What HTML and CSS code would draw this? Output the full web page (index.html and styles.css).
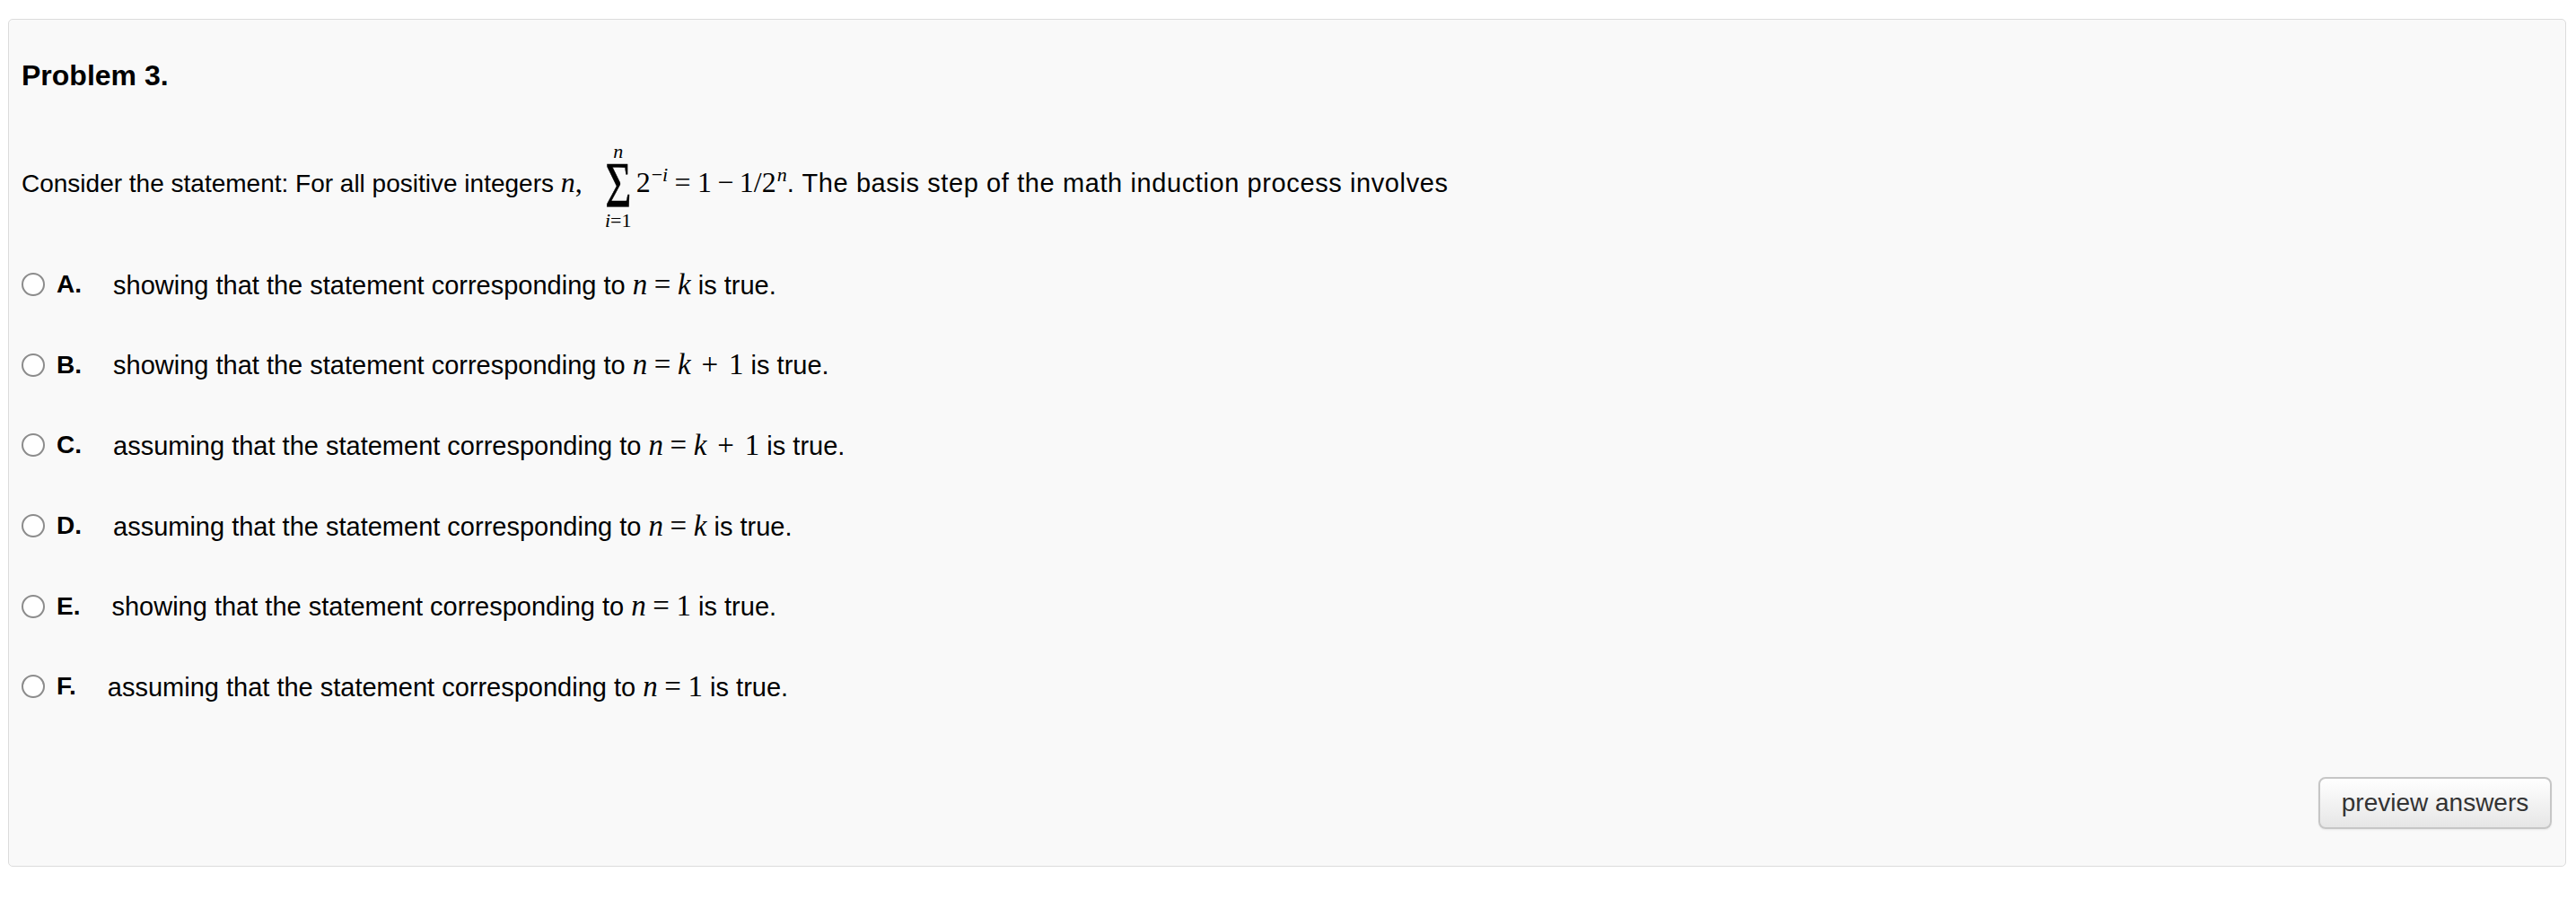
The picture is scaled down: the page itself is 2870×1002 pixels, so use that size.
FILE: index.html
```html
<!DOCTYPE html>
<html lang="en">
<head>
<meta charset="utf-8">
<title>Problem 3</title>
<link rel="stylesheet" href="styles.css">
</head>
<body>
<div class="problem">
  <h3 class="title">Problem 3.</h3>
  <div class="stem">Consider the statement: For all positive integers <span class="math"><i>n</i>,</span><span class="sum"><span class="lim top"><i>n</i></span><span class="sigma">Σ</span><span class="lim bot"><i>i</i>=1</span></span><span class="math">2<sup>−<i>i</i></sup><span class="rel">=</span>1<span class="bin">−</span>1/2<sup><i>n</i></sup></span><span class="tail">. The basis step of the math induction process involves</span></div>
  <ul class="choices">
    <li class="choice"><span class="radio"></span><span class="letter">A.</span><span class="text">showing that the statement corresponding to <span class="math"><i>n</i><span class="rel">=</span><i>k</i></span> is true.</span></li>
    <li class="choice"><span class="radio"></span><span class="letter">B.</span><span class="text">showing that the statement corresponding to <span class="math"><i>n</i><span class="rel">=</span><i>k</i><span class="bin">+</span>1</span> is true.</span></li>
    <li class="choice"><span class="radio"></span><span class="letter">C.</span><span class="text">assuming that the statement corresponding to <span class="math"><i>n</i><span class="rel">=</span><i>k</i><span class="bin">+</span>1</span> is true.</span></li>
    <li class="choice"><span class="radio"></span><span class="letter">D.</span><span class="text">assuming that the statement corresponding to <span class="math"><i>n</i><span class="rel">=</span><i>k</i></span> is true.</span></li>
    <li class="choice"><span class="radio"></span><span class="letter">E.</span><span class="text">showing that the statement corresponding to <span class="math"><i>n</i><span class="rel">=</span>1</span> is true.</span></li>
    <li class="choice"><span class="radio"></span><span class="letter">F.</span><span class="text">assuming that the statement corresponding to <span class="math"><i>n</i><span class="rel">=</span>1</span> is true.</span></li>
  </ul>
  <div class="actions"><button class="btn" type="button">preview answers</button></div>
</div>
</body>
</html>
```
FILE: styles.css
```css
* { box-sizing: border-box; }
html, body { margin: 0; background: #ffffff; }
body {
  padding: 21px 11px 0 9px;
  font-family: "Liberation Sans", Arial, Helvetica, sans-serif;
  color: #000;
}
.problem {
  background: #f9f9f9;
  border: 1px solid #dcdcdc;
  border-radius: 5px;
  padding: 43px 15px 41px 14px;
}
.title {
  margin: 0;
  font-size: 32px;
  line-height: 38px;
  font-weight: bold;
}
.stem {
  margin-top: 54px;
  font-size: 28px;
  line-height: 40px;
}
.tail {
  font-size: 29px;
  letter-spacing: 0.6px;
}
.math {
  font-family: "Liberation Serif", "Times New Roman", serif;
  font-size: 32px;
}
.math i, .lim i { font-style: italic; }
.math sup {
  font-size: 22px;
  line-height: 0;
  vertical-align: 0.55em;
  margin-left: 1px;
}
.rel { margin: 0 0.23em; }
.bin { margin: 0 0.2em; }
.sum {
  display: inline-flex;
  flex-direction: column;
  align-items: center;
  vertical-align: middle;
  margin: 0 4px 0 24px;
  font-family: "Liberation Serif", "Times New Roman", serif;
}
.lim {
  font-size: 22px;
  line-height: 22px;
}
.lim.top { padding-top: 1px; }
.lim.bot { margin-top: 3px; }
.sigma {
  font-size: 72px;
  line-height: 52px;
  transform: scaleX(0.7);
  margin: 0 -5px;
  -webkit-text-stroke: 0.5px #000;
}
.choices {
  list-style: none;
  margin: 40px 0 0;
  padding: 0;
  display: flex;
  flex-direction: column;
  gap: 49.7px;
}
.choice {
  display: flex;
  align-items: center;
  height: 40px;
  font-size: 29px;
}
.choice .math { font-size: 33px; }
.choice .bin { margin: 0 0.36em; }
.radio {
  width: 26px;
  height: 26px;
  border: 2px solid #8c8c8c;
  border-radius: 50%;
  background: #fff;
  flex: none;
}
.letter {
  font-weight: bold;
  font-size: 28px;
  margin-left: 13px;
  margin-right: 35px;
}
.actions {
  display: flex;
  justify-content: flex-end;
  margin-top: 81px;
}
.btn {
  height: 58px;
  width: 260px;
  padding: 0;
  font-family: "Liberation Sans", Arial, Helvetica, sans-serif;
  font-size: 28px;
  color: #333;
  border: 2px solid #c6c6c6;
  border-radius: 8px;
  background: linear-gradient(#ffffff, #e6e6e6);
  box-shadow: 0 1px 2px rgba(0, 0, 0, 0.08);
}
```
